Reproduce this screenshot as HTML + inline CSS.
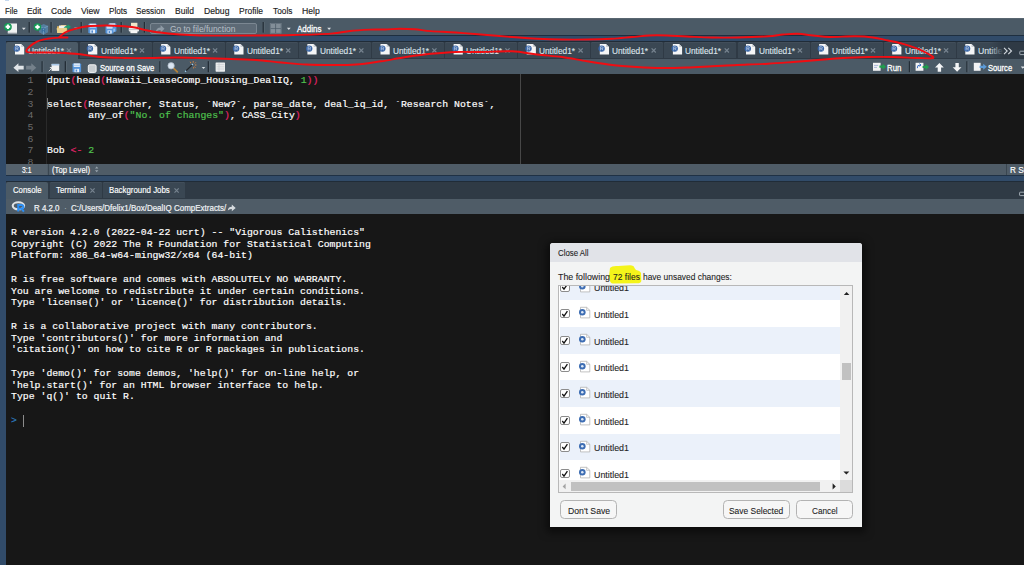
<!DOCTYPE html>
<html><head><meta charset="utf-8"><title>RStudio</title>
<style>
html,body{margin:0;padding:0;background:#161616;}
#root{position:relative;width:1024px;height:565px;overflow:hidden;font-family:"Liberation Sans",sans-serif;}
.b{position:absolute;}
.t{position:absolute;white-space:pre;line-height:1;transform-origin:0 0;display:inline-block;font-family:"Liberation Sans",sans-serif;}
.m{position:absolute;white-space:pre;line-height:1;font-family:"Liberation Mono",monospace;font-size:9.8px;letter-spacing:0.02px;-webkit-text-stroke:0.18px currentColor;}
.m i{font-style:normal;}
.m i.p{color:#e5246a;}
.m i.s{color:#4fc24f;}
svg{position:absolute;overflow:visible;}
</style></head><body><div id="root">
<div class="b" style="left:0px;top:0px;width:1024px;height:565px;background:#171717;"></div>
<div class="b" style="left:0px;top:0px;width:1024px;height:18px;background:#ffffff;"></div>
<div class="b" style="left:0px;top:18px;width:1024px;height:17.5px;background:#4b5a66;"></div>
<div class="b" style="left:0px;top:18px;width:1024px;height:1.4px;background:linear-gradient(#66727b,#4b5a66);"></div>
<div class="b" style="left:5px;top:0px;width:4px;height:1px;background:#c5d9ef;"></div>
<div class="b" style="left:0px;top:35.5px;width:1024px;height:529.5px;background:#314b69;"></div>
<div class="b" style="left:0px;top:35.4px;width:1024px;height:1.1px;background:#1e2f40;"></div>
<div class="b" style="left:6.2px;top:41px;width:1017.8px;height:1px;background:#202c38;"></div>
<div class="b" style="left:6.2px;top:42px;width:1017.8px;height:17px;background:#2f3a45;"></div>
<div class="b" style="left:6.2px;top:58.5px;width:1017.8px;height:15.8px;background:#4b5a66;"></div>
<div class="b" style="left:6.2px;top:74.2px;width:1017.8px;height:90px;background:#171717;"></div>
<div class="b" style="left:6.2px;top:163.6px;width:1017.8px;height:11.6px;background:#4f5c67;"></div>
<div class="b" style="left:6.2px;top:175.2px;width:1017.8px;height:0.9px;background:#1f3145;"></div>
<div class="b" style="left:6.2px;top:181.1px;width:1017.8px;height:1px;background:#202c38;"></div>
<div class="b" style="left:6.2px;top:182px;width:1017.8px;height:16.6px;background:#2f3a45;"></div>
<div class="b" style="left:6.2px;top:198.6px;width:1017.8px;height:15.2px;background:#4f5c67;"></div>
<div class="b" style="left:6.2px;top:213.8px;width:1017.8px;height:352px;background:#171717;"></div>
<span class="t" style="left:4.70px;top:6.00px;font-size:9.7px;color:#1b1b1b;transform:scaleX(0.8126);-webkit-text-stroke:0.15px #1b1b1b;">File</span>
<span class="t" style="left:26.60px;top:6.00px;font-size:9.7px;color:#1b1b1b;transform:scaleX(0.8615);-webkit-text-stroke:0.15px #1b1b1b;">Edit</span>
<span class="t" style="left:50.70px;top:6.00px;font-size:9.7px;color:#1b1b1b;transform:scaleX(0.8798);-webkit-text-stroke:0.15px #1b1b1b;">Code</span>
<span class="t" style="left:80.60px;top:6.00px;font-size:9.7px;color:#1b1b1b;transform:scaleX(0.8921);-webkit-text-stroke:0.15px #1b1b1b;">View</span>
<span class="t" style="left:108.80px;top:6.00px;font-size:9.7px;color:#1b1b1b;transform:scaleX(0.8440);-webkit-text-stroke:0.15px #1b1b1b;">Plots</span>
<span class="t" style="left:136.20px;top:6.00px;font-size:9.7px;color:#1b1b1b;transform:scaleX(0.8433);-webkit-text-stroke:0.15px #1b1b1b;">Session</span>
<span class="t" style="left:174.60px;top:6.00px;font-size:9.7px;color:#1b1b1b;transform:scaleX(0.8809);-webkit-text-stroke:0.15px #1b1b1b;">Build</span>
<span class="t" style="left:203.50px;top:6.00px;font-size:9.7px;color:#1b1b1b;transform:scaleX(0.8922);-webkit-text-stroke:0.15px #1b1b1b;">Debug</span>
<span class="t" style="left:238.90px;top:6.00px;font-size:9.7px;color:#1b1b1b;transform:scaleX(0.8766);-webkit-text-stroke:0.15px #1b1b1b;">Profile</span>
<span class="t" style="left:272.60px;top:6.00px;font-size:9.7px;color:#1b1b1b;transform:scaleX(0.8568);-webkit-text-stroke:0.15px #1b1b1b;">Tools</span>
<span class="t" style="left:302.00px;top:6.00px;font-size:9.7px;color:#1b1b1b;transform:scaleX(0.8923);-webkit-text-stroke:0.15px #1b1b1b;">Help</span>
<div class="b" style="left:150px;top:22.6px;width:107.2px;height:11.2px;background:#5d6a76;border:0.8px solid #7b8792;border-radius:2px;box-sizing:border-box;"></div>
<span class="t" style="left:170.30px;top:24.00px;font-size:9.6px;color:#b7bfc6;transform:scaleX(0.8754);">Go to file/function</span>
<span class="t" style="left:297.20px;top:24.00px;font-size:9.6px;color:#ffffff;transform:scaleX(0.8313);-webkit-text-stroke:0.3px #ffffff;">Addins</span>
<div class="b" style="left:6.2px;top:42px;width:71.6px;height:17px;background:#4b5a66;border-radius:2px 2px 0 0;"></div>
<span class="t" style="left:27.50px;top:47.00px;font-size:8.9px;color:#dfe5ec;transform:scaleX(0.9355);-webkit-text-stroke:0.12px #dfe5ec;">Untitled1*</span>
<div class="b" style="left:79.6px;top:42px;width:72px;height:15.8px;background:#3a4753;border-radius:2px 2px 0 0;box-shadow:inset 0 0.6px 0 #4a5763;"></div>
<span class="t" style="left:100.60px;top:47.00px;font-size:8.9px;color:#dfe5ec;transform:scaleX(0.9355);-webkit-text-stroke:0.12px #dfe5ec;">Untitled1*</span>
<div class="b" style="left:152.7px;top:42px;width:72px;height:15.8px;background:#3a4753;border-radius:2px 2px 0 0;box-shadow:inset 0 0.6px 0 #4a5763;"></div>
<span class="t" style="left:173.70px;top:47.00px;font-size:8.9px;color:#dfe5ec;transform:scaleX(0.9355);-webkit-text-stroke:0.12px #dfe5ec;">Untitled1*</span>
<div class="b" style="left:225.79999999999998px;top:42px;width:72px;height:15.8px;background:#3a4753;border-radius:2px 2px 0 0;box-shadow:inset 0 0.6px 0 #4a5763;"></div>
<span class="t" style="left:246.80px;top:47.00px;font-size:8.9px;color:#dfe5ec;transform:scaleX(0.9355);-webkit-text-stroke:0.12px #dfe5ec;">Untitled1*</span>
<div class="b" style="left:298.9px;top:42px;width:72px;height:15.8px;background:#3a4753;border-radius:2px 2px 0 0;box-shadow:inset 0 0.6px 0 #4a5763;"></div>
<span class="t" style="left:319.90px;top:47.00px;font-size:8.9px;color:#dfe5ec;transform:scaleX(0.9355);-webkit-text-stroke:0.12px #dfe5ec;">Untitled1*</span>
<div class="b" style="left:372.0px;top:42px;width:72px;height:15.8px;background:#3a4753;border-radius:2px 2px 0 0;box-shadow:inset 0 0.6px 0 #4a5763;"></div>
<span class="t" style="left:393.00px;top:47.00px;font-size:8.9px;color:#dfe5ec;transform:scaleX(0.9355);-webkit-text-stroke:0.12px #dfe5ec;">Untitled1*</span>
<div class="b" style="left:445.1px;top:42px;width:72px;height:15.8px;background:#3a4753;border-radius:2px 2px 0 0;box-shadow:inset 0 0.6px 0 #4a5763;"></div>
<span class="t" style="left:466.10px;top:47.00px;font-size:8.9px;color:#dfe5ec;transform:scaleX(0.9355);-webkit-text-stroke:0.12px #dfe5ec;">Untitled1*</span>
<div class="b" style="left:518.1999999999999px;top:42px;width:72px;height:15.8px;background:#3a4753;border-radius:2px 2px 0 0;box-shadow:inset 0 0.6px 0 #4a5763;"></div>
<span class="t" style="left:539.20px;top:47.00px;font-size:8.9px;color:#dfe5ec;transform:scaleX(0.9355);-webkit-text-stroke:0.12px #dfe5ec;">Untitled1*</span>
<div class="b" style="left:591.3px;top:42px;width:72px;height:15.8px;background:#3a4753;border-radius:2px 2px 0 0;box-shadow:inset 0 0.6px 0 #4a5763;"></div>
<span class="t" style="left:612.30px;top:47.00px;font-size:8.9px;color:#dfe5ec;transform:scaleX(0.9355);-webkit-text-stroke:0.12px #dfe5ec;">Untitled1*</span>
<div class="b" style="left:664.4px;top:42px;width:72px;height:15.8px;background:#3a4753;border-radius:2px 2px 0 0;box-shadow:inset 0 0.6px 0 #4a5763;"></div>
<span class="t" style="left:685.40px;top:47.00px;font-size:8.9px;color:#dfe5ec;transform:scaleX(0.9355);-webkit-text-stroke:0.12px #dfe5ec;">Untitled1*</span>
<div class="b" style="left:737.5px;top:42px;width:72px;height:15.8px;background:#3a4753;border-radius:2px 2px 0 0;box-shadow:inset 0 0.6px 0 #4a5763;"></div>
<span class="t" style="left:758.50px;top:47.00px;font-size:8.9px;color:#dfe5ec;transform:scaleX(0.9355);-webkit-text-stroke:0.12px #dfe5ec;">Untitled1*</span>
<div class="b" style="left:810.6px;top:42px;width:72px;height:15.8px;background:#3a4753;border-radius:2px 2px 0 0;box-shadow:inset 0 0.6px 0 #4a5763;"></div>
<span class="t" style="left:831.60px;top:47.00px;font-size:8.9px;color:#dfe5ec;transform:scaleX(0.9355);-webkit-text-stroke:0.12px #dfe5ec;">Untitled1*</span>
<div class="b" style="left:883.6999999999999px;top:42px;width:72px;height:15.8px;background:#3a4753;border-radius:2px 2px 0 0;box-shadow:inset 0 0.6px 0 #4a5763;"></div>
<span class="t" style="left:904.70px;top:47.00px;font-size:8.9px;color:#dfe5ec;transform:scaleX(0.9355);-webkit-text-stroke:0.12px #dfe5ec;">Untitled1*</span>
<div class="b" style="left:956.8px;top:42px;width:72px;height:15.8px;background:#3a4753;border-radius:2px 2px 0 0;box-shadow:inset 0 0.6px 0 #4a5763;"></div>
<span class="t" style="left:977.80px;top:47.00px;font-size:8.9px;color:#dfe5ec;transform:scaleX(0.9752);-webkit-text-stroke:0.12px #dfe5ec;">Untitle</span>
<div class="b" style="left:989px;top:42px;width:15px;height:16.4px;background:linear-gradient(90deg,rgba(47,58,69,0),#2f3a45);"></div>
<div class="b" style="left:1003.5px;top:42px;width:21px;height:16.4px;background:#2f3a45;"></div>
<span class="t" style="left:99.60px;top:63.00px;font-size:9.4px;color:#ffffff;transform:scaleX(0.8133);-webkit-text-stroke:0.3px #ffffff;">Source on Save</span>
<span class="t" style="left:887.40px;top:63.00px;font-size:9.4px;color:#ffffff;transform:scaleX(0.8351);-webkit-text-stroke:0.3px #ffffff;">Run</span>
<span class="t" style="left:988.20px;top:63.00px;font-size:9.4px;color:#ffffff;transform:scaleX(0.8126);-webkit-text-stroke:0.3px #ffffff;">Source</span>
<div class="b" style="left:6.2px;top:163.6px;width:41px;height:11.6px;background:#55626d;"></div>
<div class="b" style="left:48px;top:163.6px;width:1px;height:11.6px;background:#3a4650;"></div>
<div class="b" style="left:1006px;top:163.6px;width:1px;height:11.6px;background:#3a4650;"></div>
<span class="t" style="left:21.90px;top:166.00px;font-size:8.8px;color:#ffffff;transform:scaleX(0.7685);-webkit-text-stroke:0.15px #ffffff;">3:1</span>
<span class="t" style="left:52.30px;top:166.00px;font-size:8.8px;color:#ffffff;transform:scaleX(0.8730);-webkit-text-stroke:0.15px #ffffff;">(Top Level)</span>
<span class="t" style="left:1010.30px;top:166.00px;font-size:8.8px;color:#ffffff;transform:scaleX(0.9282);-webkit-text-stroke:0.15px #ffffff;">R Sc</span>
<div class="b" style="left:6.2px;top:182px;width:41.5px;height:17px;background:#4b5a66;border-radius:2px 2px 0 0;"></div>
<div class="b" style="left:49.6px;top:182px;width:52.6px;height:16px;background:#3a4753;border-radius:2px 2px 0 0;box-shadow:inset 0 0.6px 0 #4a5763;"></div>
<div class="b" style="left:103.2px;top:182px;width:82px;height:16px;background:#3a4753;border-radius:2px 2px 0 0;box-shadow:inset 0 0.6px 0 #4a5763;"></div>
<span class="t" style="left:13.30px;top:186.00px;font-size:8.9px;color:#ffffff;transform:scaleX(0.8759);-webkit-text-stroke:0.15px #ffffff;">Console</span>
<span class="t" style="left:56.00px;top:186.00px;font-size:8.9px;color:#ffffff;transform:scaleX(0.8921);-webkit-text-stroke:0.15px #ffffff;">Terminal</span>
<span class="t" style="left:109.40px;top:186.00px;font-size:8.9px;color:#ffffff;transform:scaleX(0.8856);-webkit-text-stroke:0.15px #ffffff;">Background Jobs</span>
<span class="t" style="left:34.00px;top:203.00px;font-size:9.5px;color:#f1f3f5;transform:scaleX(0.8326);-webkit-text-stroke:0.25px #f1f3f5;">R 4.2.0</span>
<span class="t" style="left:63.80px;top:203.00px;font-size:9.5px;color:#aab3bb;transform:scaleX(0.9000);">·</span>
<span class="t" style="left:70.50px;top:204.00px;font-size:9.0px;color:#f1f3f5;transform:scaleX(0.8872);-webkit-text-stroke:0.2px #f1f3f5;">C:/Users/Dfelix1/Box/DealIQ CompExtracts/</span>
<span class="m" style="left:15px;width:18.5px;text-align:right;top:76px;color:#6c6c6c;-webkit-text-stroke:0;">1</span>
<span class="m" style="left:47px;top:76.00px;color:#ffffff;">dput<i class="p">(</i>head<i class="p">(</i>Hawaii_LeaseComp_Housing_DealIQ, <i class="s">1</i><i class="p">))</i></span>
<span class="m" style="left:15px;width:18.5px;text-align:right;top:88px;color:#6c6c6c;-webkit-text-stroke:0;">2</span>
<span class="m" style="left:15px;width:18.5px;text-align:right;top:100px;color:#6c6c6c;-webkit-text-stroke:0;">3</span>
<span class="m" style="left:47px;top:100.00px;color:#ffffff;">select<i class="p">(</i>Researcher, Status, `New?`, parse_date, deal_iq_id, `Research Notes`,</span>
<span class="m" style="left:15px;width:18.5px;text-align:right;top:111px;color:#6c6c6c;-webkit-text-stroke:0;">4</span>
<span class="m" style="left:47px;top:111.00px;color:#ffffff;">       any_of<i class="p">(</i><i class="s">"No. of changes"</i><i class="p">)</i>, CASS_City<i class="p">)</i></span>
<span class="m" style="left:15px;width:18.5px;text-align:right;top:123px;color:#6c6c6c;-webkit-text-stroke:0;">5</span>
<span class="m" style="left:15px;width:18.5px;text-align:right;top:135px;color:#6c6c6c;-webkit-text-stroke:0;">6</span>
<span class="m" style="left:15px;width:18.5px;text-align:right;top:146px;color:#6c6c6c;-webkit-text-stroke:0;">7</span>
<span class="m" style="left:47px;top:146.00px;color:#ffffff;">Bob <i class="p">&lt;-</i> <i class="s">2</i></span>
<span class="m" style="left:15px;width:18.5px;text-align:right;top:158px;color:#6c6c6c;-webkit-text-stroke:0;">8</span>
<div class="b" style="left:45.5px;top:74px;width:0.8px;height:90px;background:#2a2a2a;"></div>
<div class="b" style="left:520px;top:74.2px;width:1px;height:89.4px;background:#474747;"></div>
<span class="m" style="left:11px;top:228.00px;color:#ffffff;">R version 4.2.0 (2022-04-22 ucrt) -- "Vigorous Calisthenics"</span>
<span class="m" style="left:11px;top:240.00px;color:#ffffff;">Copyright (C) 2022 The R Foundation for Statistical Computing</span>
<span class="m" style="left:11px;top:251.00px;color:#ffffff;">Platform: x86_64-w64-mingw32/x64 (64-bit)</span>
<span class="m" style="left:11px;top:275.00px;color:#ffffff;">R is free software and comes with ABSOLUTELY NO WARRANTY.</span>
<span class="m" style="left:11px;top:287.00px;color:#ffffff;">You are welcome to redistribute it under certain conditions.</span>
<span class="m" style="left:11px;top:298.00px;color:#ffffff;">Type 'license()' or 'licence()' for distribution details.</span>
<span class="m" style="left:11px;top:322.00px;color:#ffffff;">R is a collaborative project with many contributors.</span>
<span class="m" style="left:11px;top:334.00px;color:#ffffff;">Type 'contributors()' for more information and</span>
<span class="m" style="left:11px;top:345.00px;color:#ffffff;">'citation()' on how to cite R or R packages in publications.</span>
<span class="m" style="left:11px;top:369.00px;color:#ffffff;">Type 'demo()' for some demos, 'help()' for on-line help, or</span>
<span class="m" style="left:11px;top:381.00px;color:#ffffff;">'help.start()' for an HTML browser interface to help.</span>
<span class="m" style="left:11px;top:392.00px;color:#ffffff;">Type 'q()' to quit R.</span>
<span class="m" style="left:11px;top:416.00px;color:#2d7bbf;">&gt;</span>
<div class="b" style="left:23.3px;top:415px;width:1.1px;height:11.6px;background:#8c8c8c;"></div>
<div class="b" style="left:47px;top:97.5px;width:1px;height:11.5px;background:#7c7c7c;"></div>
<div class="b" style="left:550.3px;top:242.6px;width:311.9px;height:284.7px;background:#f3f4f4;border-radius:3px 3px 0 0;box-shadow:0 2px 9px 3px rgba(0,0,0,0.55);"></div>
<div class="b" style="left:550.3px;top:242.6px;width:311.9px;height:19.2px;background:#e1e3e8;border-radius:3px 3px 0 0;"></div>
<span class="t" style="left:557.50px;top:249.00px;font-size:9.0px;color:#1e1e1e;transform:scaleX(0.8710);-webkit-text-stroke:0.1px #1e1e1e;">Close All</span>
<svg style="left:0;top:0" width="1024" height="565"><path d="M610 268 Q612 265.5 618 266 L630 265.3 Q634 265.5 634.5 268 L636 270 Q640 270.5 641 273 L641.3 281 Q641 283.5 636 283.3 L614 283.6 Q610.5 283.5 610 281 L609 276 Z" fill="#f4f41a"/></svg>
<span class="t" style="left:558.00px;top:273.00px;font-size:9.3px;color:#1e1e1e;transform:scaleX(0.9490);-webkit-text-stroke:0.1px #1e1e1e;">The following</span>
<span class="t" style="left:613.10px;top:273.00px;font-size:9.3px;color:#1e1e1e;transform:scaleX(0.9129);-webkit-text-stroke:0.1px #1e1e1e;">72 files</span>
<span class="t" style="left:643.10px;top:273.00px;font-size:9.3px;color:#1e1e1e;transform:scaleX(0.9050);-webkit-text-stroke:0.1px #1e1e1e;">have unsaved changes:</span>
<div class="b" style="left:558px;top:285px;width:295px;height:207.5px;background:#ffffff;border:1px solid #b8b8b8;box-sizing:border-box;overflow:hidden;">
<div class="b" style="left:0.70px;top:-1.00px;width:280.30px;height:15.40px;background:#ebf1fa;"></div>
<div class="b" style="left:0.70px;top:41.07px;width:280.30px;height:26.67px;background:#ebf1fa;"></div>
<div class="b" style="left:0.70px;top:94.41px;width:280.30px;height:26.67px;background:#ebf1fa;"></div>
<div class="b" style="left:0.70px;top:147.75px;width:280.30px;height:26.67px;background:#ebf1fa;"></div>
<div class="b" style="left:1.40px;top:-3.70px;width:9.6px;height:9.4px;box-sizing:border-box;border:1px solid #8c8c8c;border-radius:2px;background:#fff;"></div>
<svg style="left:1.40px;top:-3.70px" width="10" height="10"><path d="M2.3 5 L4 7.2 L7.4 2.2" fill="none" stroke="#111" stroke-width="1.3"/></svg>
<svg style="left:20.00px;top:-5.40px" width="12" height="12"><path d="M1.5 0.3 H7.6 L10.8 3.3 V10.9 H1.5 Z" fill="#fff" stroke="#a9a9a9" stroke-width="0.7"/><path d="M7.6 0.3 V3.3 H10.8" fill="none" stroke="#a9a9a9" stroke-width="0.6"/><circle cx="3.3" cy="5.3" r="3.3" fill="#3d6db3"/><circle cx="3.3" cy="5.3" r="1.3" fill="#dfe8f5"/></svg>
<span class="t" style="left:34.90px;top:-2.00px;font-size:9.3px;color:#1e1e1e;transform:scaleX(0.9509);-webkit-text-stroke:0.1px #1e1e1e;">Untitled1</span>
<div class="b" style="left:1.40px;top:22.97px;width:9.6px;height:9.4px;box-sizing:border-box;border:1px solid #8c8c8c;border-radius:2px;background:#fff;"></div>
<svg style="left:1.40px;top:22.97px" width="10" height="10"><path d="M2.3 5 L4 7.2 L7.4 2.2" fill="none" stroke="#111" stroke-width="1.3"/></svg>
<svg style="left:20.00px;top:21.27px" width="12" height="12"><path d="M1.5 0.3 H7.6 L10.8 3.3 V10.9 H1.5 Z" fill="#fff" stroke="#a9a9a9" stroke-width="0.7"/><path d="M7.6 0.3 V3.3 H10.8" fill="none" stroke="#a9a9a9" stroke-width="0.6"/><circle cx="3.3" cy="5.3" r="3.3" fill="#3d6db3"/><circle cx="3.3" cy="5.3" r="1.3" fill="#dfe8f5"/></svg>
<span class="t" style="left:34.90px;top:25.00px;font-size:9.3px;color:#1e1e1e;transform:scaleX(0.9509);-webkit-text-stroke:0.1px #1e1e1e;">Untitled1</span>
<div class="b" style="left:1.40px;top:49.64px;width:9.6px;height:9.4px;box-sizing:border-box;border:1px solid #8c8c8c;border-radius:2px;background:#fff;"></div>
<svg style="left:1.40px;top:49.64px" width="10" height="10"><path d="M2.3 5 L4 7.2 L7.4 2.2" fill="none" stroke="#111" stroke-width="1.3"/></svg>
<svg style="left:20.00px;top:47.94px" width="12" height="12"><path d="M1.5 0.3 H7.6 L10.8 3.3 V10.9 H1.5 Z" fill="#fff" stroke="#a9a9a9" stroke-width="0.7"/><path d="M7.6 0.3 V3.3 H10.8" fill="none" stroke="#a9a9a9" stroke-width="0.6"/><circle cx="3.3" cy="5.3" r="3.3" fill="#3d6db3"/><circle cx="3.3" cy="5.3" r="1.3" fill="#dfe8f5"/></svg>
<span class="t" style="left:34.90px;top:52.00px;font-size:9.3px;color:#1e1e1e;transform:scaleX(0.9509);-webkit-text-stroke:0.1px #1e1e1e;">Untitled1</span>
<div class="b" style="left:1.40px;top:76.31px;width:9.6px;height:9.4px;box-sizing:border-box;border:1px solid #8c8c8c;border-radius:2px;background:#fff;"></div>
<svg style="left:1.40px;top:76.31px" width="10" height="10"><path d="M2.3 5 L4 7.2 L7.4 2.2" fill="none" stroke="#111" stroke-width="1.3"/></svg>
<svg style="left:20.00px;top:74.61px" width="12" height="12"><path d="M1.5 0.3 H7.6 L10.8 3.3 V10.9 H1.5 Z" fill="#fff" stroke="#a9a9a9" stroke-width="0.7"/><path d="M7.6 0.3 V3.3 H10.8" fill="none" stroke="#a9a9a9" stroke-width="0.6"/><circle cx="3.3" cy="5.3" r="3.3" fill="#3d6db3"/><circle cx="3.3" cy="5.3" r="1.3" fill="#dfe8f5"/></svg>
<span class="t" style="left:34.90px;top:78.00px;font-size:9.3px;color:#1e1e1e;transform:scaleX(0.9509);-webkit-text-stroke:0.1px #1e1e1e;">Untitled1</span>
<div class="b" style="left:1.40px;top:102.98px;width:9.6px;height:9.4px;box-sizing:border-box;border:1px solid #8c8c8c;border-radius:2px;background:#fff;"></div>
<svg style="left:1.40px;top:102.98px" width="10" height="10"><path d="M2.3 5 L4 7.2 L7.4 2.2" fill="none" stroke="#111" stroke-width="1.3"/></svg>
<svg style="left:20.00px;top:101.28px" width="12" height="12"><path d="M1.5 0.3 H7.6 L10.8 3.3 V10.9 H1.5 Z" fill="#fff" stroke="#a9a9a9" stroke-width="0.7"/><path d="M7.6 0.3 V3.3 H10.8" fill="none" stroke="#a9a9a9" stroke-width="0.6"/><circle cx="3.3" cy="5.3" r="3.3" fill="#3d6db3"/><circle cx="3.3" cy="5.3" r="1.3" fill="#dfe8f5"/></svg>
<span class="t" style="left:34.90px;top:105.00px;font-size:9.3px;color:#1e1e1e;transform:scaleX(0.9509);-webkit-text-stroke:0.1px #1e1e1e;">Untitled1</span>
<div class="b" style="left:1.40px;top:129.65px;width:9.6px;height:9.4px;box-sizing:border-box;border:1px solid #8c8c8c;border-radius:2px;background:#fff;"></div>
<svg style="left:1.40px;top:129.65px" width="10" height="10"><path d="M2.3 5 L4 7.2 L7.4 2.2" fill="none" stroke="#111" stroke-width="1.3"/></svg>
<svg style="left:20.00px;top:127.95px" width="12" height="12"><path d="M1.5 0.3 H7.6 L10.8 3.3 V10.9 H1.5 Z" fill="#fff" stroke="#a9a9a9" stroke-width="0.7"/><path d="M7.6 0.3 V3.3 H10.8" fill="none" stroke="#a9a9a9" stroke-width="0.6"/><circle cx="3.3" cy="5.3" r="3.3" fill="#3d6db3"/><circle cx="3.3" cy="5.3" r="1.3" fill="#dfe8f5"/></svg>
<span class="t" style="left:34.90px;top:132.00px;font-size:9.3px;color:#1e1e1e;transform:scaleX(0.9509);-webkit-text-stroke:0.1px #1e1e1e;">Untitled1</span>
<div class="b" style="left:1.40px;top:156.32px;width:9.6px;height:9.4px;box-sizing:border-box;border:1px solid #8c8c8c;border-radius:2px;background:#fff;"></div>
<svg style="left:1.40px;top:156.32px" width="10" height="10"><path d="M2.3 5 L4 7.2 L7.4 2.2" fill="none" stroke="#111" stroke-width="1.3"/></svg>
<svg style="left:20.00px;top:154.62px" width="12" height="12"><path d="M1.5 0.3 H7.6 L10.8 3.3 V10.9 H1.5 Z" fill="#fff" stroke="#a9a9a9" stroke-width="0.7"/><path d="M7.6 0.3 V3.3 H10.8" fill="none" stroke="#a9a9a9" stroke-width="0.6"/><circle cx="3.3" cy="5.3" r="3.3" fill="#3d6db3"/><circle cx="3.3" cy="5.3" r="1.3" fill="#dfe8f5"/></svg>
<span class="t" style="left:34.90px;top:158.00px;font-size:9.3px;color:#1e1e1e;transform:scaleX(0.9509);-webkit-text-stroke:0.1px #1e1e1e;">Untitled1</span>
<div class="b" style="left:1.40px;top:182.99px;width:9.6px;height:9.4px;box-sizing:border-box;border:1px solid #8c8c8c;border-radius:2px;background:#fff;"></div>
<svg style="left:1.40px;top:182.99px" width="10" height="10"><path d="M2.3 5 L4 7.2 L7.4 2.2" fill="none" stroke="#111" stroke-width="1.3"/></svg>
<svg style="left:20.00px;top:181.29px" width="12" height="12"><path d="M1.5 0.3 H7.6 L10.8 3.3 V10.9 H1.5 Z" fill="#fff" stroke="#a9a9a9" stroke-width="0.7"/><path d="M7.6 0.3 V3.3 H10.8" fill="none" stroke="#a9a9a9" stroke-width="0.6"/><circle cx="3.3" cy="5.3" r="3.3" fill="#3d6db3"/><circle cx="3.3" cy="5.3" r="1.3" fill="#dfe8f5"/></svg>
<span class="t" style="left:34.90px;top:185.00px;font-size:9.3px;color:#1e1e1e;transform:scaleX(0.9509);-webkit-text-stroke:0.1px #1e1e1e;">Untitled1</span>
<div class="b" style="left:281.00px;top:-1.00px;width:13.00px;height:196.00px;background:#f1f1f1;"></div>
<div class="b" style="left:283.00px;top:77.00px;width:8.60px;height:16.50px;background:#c1c1c1;"></div>
<svg style="left:283.5px;top:4.5px" width="8" height="5"><path d="M0.8 4 L3.6 0.9 L6.4 4 Z" fill="#222"/></svg>
<svg style="left:283.79999999999995px;top:184.5px" width="8" height="5"><path d="M0.4 0.5 L3.4 3.6 L6.4 0.5 Z" fill="#222"/></svg>
<div class="b" style="left:0.00px;top:194.40px;width:281.00px;height:12.10px;background:#f1f1f1;"></div>
<div class="b" style="left:11.60px;top:196.00px;width:249.20px;height:8.60px;background:#c1c1c1;"></div>
<svg style="left:3px;top:197px" width="5" height="8"><path d="M3.6 0.5 L0.6 3.4 L3.6 6.3 Z" fill="#a3a3a3"/></svg>
<svg style="left:273px;top:197px" width="5" height="8"><path d="M0.6 0.3 L3.8 3.4 L0.6 6.5 Z" fill="#222"/></svg>
<div class="b" style="left:281.00px;top:194.40px;width:13.00px;height:12.10px;background:#dcdcdc;"></div>
</div>
<div class="b" style="left:560px;top:500px;width:57px;height:19.4px;box-sizing:border-box;border:1px solid #b3b3b3;border-radius:4.5px;background:#f6f6f6;"></div>
<span class="t" style="left:567.60px;top:506.00px;font-size:9.4px;color:#1e1e1e;transform:scaleX(0.9237);-webkit-text-stroke:0.1px #1e1e1e;">Don't Save</span>
<div class="b" style="left:722.5px;top:500px;width:67.20000000000005px;height:19.4px;box-sizing:border-box;border:1px solid #b3b3b3;border-radius:4.5px;background:#f6f6f6;"></div>
<span class="t" style="left:728.80px;top:506.00px;font-size:9.4px;color:#1e1e1e;transform:scaleX(0.8975);-webkit-text-stroke:0.1px #1e1e1e;">Save Selected</span>
<div class="b" style="left:796px;top:500px;width:56.60000000000002px;height:19.4px;box-sizing:border-box;border:1px solid #b3b3b3;border-radius:4.5px;background:#f6f6f6;"></div>
<span class="t" style="left:811.50px;top:506.00px;font-size:9.4px;color:#1e1e1e;transform:scaleX(0.8784);-webkit-text-stroke:0.1px #1e1e1e;">Cancel</span>
<svg style="left:0;top:0" width="1024" height="565" viewBox="0 0 1024 565"><rect x="7.8" y="23.5" width="9.2" height="9.8" fill="#f1f2f3"/><rect x="7.8" y="32.3" width="9.2" height="1" fill="#c9cdd1"/><circle cx="7.9" cy="26.8" r="3.9" fill="#149a55"/><path d="M5.6 26.8 h4.6 M7.9 24.5 v4.6" stroke="#fff" stroke-width="2"/><path d="M21.9 27.8 h3.8 l-1.9 2.2 Z" fill="#d9dee2"/><rect x="28.6" y="22" width="1.3" height="10.600000000000001" fill="#232d36"/><rect x="29.900000000000002" y="22" width="0.8" height="10.600000000000001" fill="#5a6873"/><path d="M39 26.2 l4.7 -2.2 l4.4 2 v6.2 l-4.6 2.5 l-4.5 -2.4 Z" fill="#5a8db8" opacity="0.7"/><path d="M39 26.2 l4.5 2.1 l4.6 -2.3 M43.5 28.3 v6.4" stroke="#8fbadb" stroke-width="0.6" fill="none" opacity="0.8"/><path d="M42.2 32.5 v-4 h1.6 q1.1 0 1.1 1.1 q0 1 -1.1 1 h-1.4 M44 30.7 l1.1 1.8" fill="none" stroke="#2f6aa0" stroke-width="0.8"/><circle cx="37.5" cy="27" r="3.8" fill="#149a55"/><path d="M35.3 27 h4.4 M37.5 24.8 v4.4" stroke="#fff" stroke-width="1.9"/><rect x="50.5" y="22" width="1.3" height="10.600000000000001" fill="#232d36"/><rect x="51.800000000000004" y="22" width="0.8" height="10.600000000000001" fill="#5a6873"/><path d="M57 26.3 h3.3 l0.9 -1.2 h5.2 v1.2 h0.8 v6.6 h-10.2 Z" fill="#d9b25f"/><path d="M59 25.6 h6.8 v3 h-6.8 Z" fill="#f2f2ee"/><path d="M56.6 28.2 h10.2 l-0.9 4.8 h-8.6 Z" fill="#ecd089"/><path d="M63.6 27.8 q1.5 -2.2 4 -2 v-1.6 l3.4 2.6 l-3.4 2.6 v-1.6 q-2 -0.2 -4 0 Z" fill="#1c9d6b"/><path d="M74.2 27.6 h3.6 l-1.8 2.0 Z" fill="#aeb7be"/><rect x="80.6" y="22" width="1.3" height="10.600000000000001" fill="#232d36"/><rect x="81.89999999999999" y="22" width="0.8" height="10.600000000000001" fill="#5a6873"/><rect x="88.3" y="23.7" width="8.8" height="9.6" rx="0.8" fill="#5796dc"/><rect x="89.5" y="23.7" width="6.4" height="3.84" fill="#e9f1fb"/><rect x="89.5" y="25.236" width="6.4" height="0.9" fill="#9cc3ee"/><rect x="90.3" y="29.652" width="4.800000000000001" height="3.6479999999999997" fill="#e9f1fb"/><rect x="91.39999999999999" y="30.419999999999998" width="1.6" height="2.304" fill="#4d89cf"/><rect x="108.2" y="23.4" width="8.2" height="8.4" rx="0.8" fill="#5796dc"/><rect x="109.4" y="23.4" width="5.799999999999999" height="3.3600000000000003" fill="#e9f1fb"/><rect x="109.4" y="24.744" width="5.799999999999999" height="0.9" fill="#9cc3ee"/><rect x="110.2" y="28.607999999999997" width="4.199999999999999" height="3.192" fill="#e9f1fb"/><rect x="111.3" y="29.279999999999998" width="1.6" height="2.016" fill="#4d89cf"/><rect x="105.5" y="25.2" width="8.2" height="8.4" rx="0.8" fill="#5796dc"/><rect x="106.7" y="25.2" width="5.799999999999999" height="3.3600000000000003" fill="#e9f1fb"/><rect x="106.7" y="26.544" width="5.799999999999999" height="0.9" fill="#9cc3ee"/><rect x="107.5" y="30.408" width="4.199999999999999" height="3.192" fill="#e9f1fb"/><rect x="108.6" y="31.08" width="1.6" height="2.016" fill="#4d89cf"/><rect x="120.6" y="22" width="1.3" height="10.600000000000001" fill="#232d36"/><rect x="121.89999999999999" y="22" width="0.8" height="10.600000000000001" fill="#5a6873"/><rect x="131" y="22.8" width="6.4" height="4.6" fill="#efe6c9"/><rect x="128.8" y="27" width="10.2" height="4.6" rx="0.8" fill="#e6e8ea"/><rect x="130.4" y="30.4" width="7" height="2.8" fill="#f7f7f7"/><rect x="128.8" y="29.2" width="10.2" height="0.8" fill="#b9bec3"/><rect x="143.8" y="22" width="1.3" height="10.600000000000001" fill="#232d36"/><rect x="145.1" y="22" width="0.8" height="10.600000000000001" fill="#5a6873"/><path d="M156 32 q0.2 -4.2 4.6 -4.4 v-2.6 l3.9 3.7 l-3.9 3.7 v-2.5 q-3 -0.2 -4.6 2.1 Z" fill="#8f9ba6"/><rect x="262.6" y="22" width="1.3" height="10.600000000000001" fill="#232d36"/><rect x="263.90000000000003" y="22" width="0.8" height="10.600000000000001" fill="#5a6873"/><rect x="270.6" y="23.9" width="4.7" height="4.2" fill="#828e98"/><rect x="270.6" y="28.7" width="4.7" height="4.2" fill="#828e98"/><rect x="276.1" y="23.9" width="4.7" height="4.2" fill="#828e98"/><rect x="276.1" y="28.7" width="4.7" height="4.2" fill="#828e98"/><rect x="270.2" y="23.5" width="11" height="9.8" fill="none" stroke="#76828c" stroke-width="0.6"/><path d="M286.9 27.8 h3.8 l-1.9 2.2 Z" fill="#d9dee2"/><path d="M327.2 27.8 h3.8 l-1.9 2.2 Z" fill="#d9dee2"/><path d="M15.0 43.9 h6.2 l3 3 v7.6 h-9.2 Z" fill="#f4f5f6"/><path d="M21.2 43.9 v3 h3 Z" fill="#c9ced3"/><circle cx="16.8" cy="48.6" r="3.2" fill="#3865a6"/><path d="M15.7 50.4 v-3.6 h1.5 q1.1 0 1.1 1 q0 1 -1.1 1 h-1.3 M17.3 48.8 l1.1 1.6" fill="none" stroke="#dfe8f5" stroke-width="0.7" opacity="0.85"/><path d="M66.8 48.3 l4.2 4.2 M71.0 48.3 l-4.2 4.2" stroke="#76838f" stroke-width="1.2"/><path d="M88.1 43.9 h6.2 l3 3 v7.6 h-9.2 Z" fill="#f4f5f6"/><path d="M94.3 43.9 v3 h3 Z" fill="#c9ced3"/><circle cx="89.89999999999999" cy="48.6" r="3.2" fill="#3865a6"/><path d="M88.8 50.4 v-3.6 h1.5 q1.1 0 1.1 1 q0 1 -1.1 1 h-1.3 M90.39999999999999 48.8 l1.1 1.6" fill="none" stroke="#dfe8f5" stroke-width="0.7" opacity="0.85"/><path d="M139.9 48.3 l4.2 4.2 M144.10000000000002 48.3 l-4.2 4.2" stroke="#76838f" stroke-width="1.2"/><path d="M161.2 43.9 h6.2 l3 3 v7.6 h-9.2 Z" fill="#f4f5f6"/><path d="M167.39999999999998 43.9 v3 h3 Z" fill="#c9ced3"/><circle cx="163.0" cy="48.6" r="3.2" fill="#3865a6"/><path d="M161.89999999999998 50.4 v-3.6 h1.5 q1.1 0 1.1 1 q0 1 -1.1 1 h-1.3 M163.5 48.8 l1.1 1.6" fill="none" stroke="#dfe8f5" stroke-width="0.7" opacity="0.85"/><path d="M212.99999999999997 48.3 l4.2 4.2 M217.2 48.3 l-4.2 4.2" stroke="#76838f" stroke-width="1.2"/><path d="M234.29999999999998 43.9 h6.2 l3 3 v7.6 h-9.2 Z" fill="#f4f5f6"/><path d="M240.49999999999997 43.9 v3 h3 Z" fill="#c9ced3"/><circle cx="236.1" cy="48.6" r="3.2" fill="#3865a6"/><path d="M234.99999999999997 50.4 v-3.6 h1.5 q1.1 0 1.1 1 q0 1 -1.1 1 h-1.3 M236.6 48.8 l1.1 1.6" fill="none" stroke="#dfe8f5" stroke-width="0.7" opacity="0.85"/><path d="M286.1 48.3 l4.2 4.2 M290.3 48.3 l-4.2 4.2" stroke="#76838f" stroke-width="1.2"/><path d="M307.4 43.9 h6.2 l3 3 v7.6 h-9.2 Z" fill="#f4f5f6"/><path d="M313.59999999999997 43.9 v3 h3 Z" fill="#c9ced3"/><circle cx="309.2" cy="48.6" r="3.2" fill="#3865a6"/><path d="M308.09999999999997 50.4 v-3.6 h1.5 q1.1 0 1.1 1 q0 1 -1.1 1 h-1.3 M309.7 48.8 l1.1 1.6" fill="none" stroke="#dfe8f5" stroke-width="0.7" opacity="0.85"/><path d="M359.2 48.3 l4.2 4.2 M363.4 48.3 l-4.2 4.2" stroke="#76838f" stroke-width="1.2"/><path d="M380.5 43.9 h6.2 l3 3 v7.6 h-9.2 Z" fill="#f4f5f6"/><path d="M386.7 43.9 v3 h3 Z" fill="#c9ced3"/><circle cx="382.3" cy="48.6" r="3.2" fill="#3865a6"/><path d="M381.2 50.4 v-3.6 h1.5 q1.1 0 1.1 1 q0 1 -1.1 1 h-1.3 M382.8 48.8 l1.1 1.6" fill="none" stroke="#dfe8f5" stroke-width="0.7" opacity="0.85"/><path d="M432.3 48.3 l4.2 4.2 M436.5 48.3 l-4.2 4.2" stroke="#76838f" stroke-width="1.2"/><path d="M453.59999999999997 43.9 h6.2 l3 3 v7.6 h-9.2 Z" fill="#f4f5f6"/><path d="M459.79999999999995 43.9 v3 h3 Z" fill="#c9ced3"/><circle cx="455.4" cy="48.6" r="3.2" fill="#3865a6"/><path d="M454.29999999999995 50.4 v-3.6 h1.5 q1.1 0 1.1 1 q0 1 -1.1 1 h-1.3 M455.9 48.8 l1.1 1.6" fill="none" stroke="#dfe8f5" stroke-width="0.7" opacity="0.85"/><path d="M505.4 48.3 l4.2 4.2 M509.59999999999997 48.3 l-4.2 4.2" stroke="#76838f" stroke-width="1.2"/><path d="M526.6999999999999 43.9 h6.2 l3 3 v7.6 h-9.2 Z" fill="#f4f5f6"/><path d="M532.9 43.9 v3 h3 Z" fill="#c9ced3"/><circle cx="528.4999999999999" cy="48.6" r="3.2" fill="#3865a6"/><path d="M527.4 50.4 v-3.6 h1.5 q1.1 0 1.1 1 q0 1 -1.1 1 h-1.3 M528.9999999999999 48.8 l1.1 1.6" fill="none" stroke="#dfe8f5" stroke-width="0.7" opacity="0.85"/><path d="M578.5 48.3 l4.2 4.2 M582.6999999999999 48.3 l-4.2 4.2" stroke="#76838f" stroke-width="1.2"/><path d="M599.8 43.9 h6.2 l3 3 v7.6 h-9.2 Z" fill="#f4f5f6"/><path d="M606.0 43.9 v3 h3 Z" fill="#c9ced3"/><circle cx="601.5999999999999" cy="48.6" r="3.2" fill="#3865a6"/><path d="M600.5 50.4 v-3.6 h1.5 q1.1 0 1.1 1 q0 1 -1.1 1 h-1.3 M602.0999999999999 48.8 l1.1 1.6" fill="none" stroke="#dfe8f5" stroke-width="0.7" opacity="0.85"/><path d="M651.6 48.3 l4.2 4.2 M655.8 48.3 l-4.2 4.2" stroke="#76838f" stroke-width="1.2"/><path d="M672.9 43.9 h6.2 l3 3 v7.6 h-9.2 Z" fill="#f4f5f6"/><path d="M679.1 43.9 v3 h3 Z" fill="#c9ced3"/><circle cx="674.6999999999999" cy="48.6" r="3.2" fill="#3865a6"/><path d="M673.6 50.4 v-3.6 h1.5 q1.1 0 1.1 1 q0 1 -1.1 1 h-1.3 M675.1999999999999 48.8 l1.1 1.6" fill="none" stroke="#dfe8f5" stroke-width="0.7" opacity="0.85"/><path d="M724.7 48.3 l4.2 4.2 M728.9 48.3 l-4.2 4.2" stroke="#76838f" stroke-width="1.2"/><path d="M746.0 43.9 h6.2 l3 3 v7.6 h-9.2 Z" fill="#f4f5f6"/><path d="M752.2 43.9 v3 h3 Z" fill="#c9ced3"/><circle cx="747.8" cy="48.6" r="3.2" fill="#3865a6"/><path d="M746.7 50.4 v-3.6 h1.5 q1.1 0 1.1 1 q0 1 -1.1 1 h-1.3 M748.3 48.8 l1.1 1.6" fill="none" stroke="#dfe8f5" stroke-width="0.7" opacity="0.85"/><path d="M797.8000000000001 48.3 l4.2 4.2 M802.0 48.3 l-4.2 4.2" stroke="#76838f" stroke-width="1.2"/><path d="M819.0999999999999 43.9 h6.2 l3 3 v7.6 h-9.2 Z" fill="#f4f5f6"/><path d="M825.3 43.9 v3 h3 Z" fill="#c9ced3"/><circle cx="820.8999999999999" cy="48.6" r="3.2" fill="#3865a6"/><path d="M819.8 50.4 v-3.6 h1.5 q1.1 0 1.1 1 q0 1 -1.1 1 h-1.3 M821.3999999999999 48.8 l1.1 1.6" fill="none" stroke="#dfe8f5" stroke-width="0.7" opacity="0.85"/><path d="M870.9 48.3 l4.2 4.2 M875.0999999999999 48.3 l-4.2 4.2" stroke="#76838f" stroke-width="1.2"/><path d="M892.1999999999999 43.9 h6.2 l3 3 v7.6 h-9.2 Z" fill="#f4f5f6"/><path d="M898.4 43.9 v3 h3 Z" fill="#c9ced3"/><circle cx="893.9999999999999" cy="48.6" r="3.2" fill="#3865a6"/><path d="M892.9 50.4 v-3.6 h1.5 q1.1 0 1.1 1 q0 1 -1.1 1 h-1.3 M894.4999999999999 48.8 l1.1 1.6" fill="none" stroke="#dfe8f5" stroke-width="0.7" opacity="0.85"/><path d="M944.0 48.3 l4.2 4.2 M948.1999999999999 48.3 l-4.2 4.2" stroke="#76838f" stroke-width="1.2"/><path d="M965.3 43.9 h6.2 l3 3 v7.6 h-9.2 Z" fill="#f4f5f6"/><path d="M971.5 43.9 v3 h3 Z" fill="#c9ced3"/><circle cx="967.0999999999999" cy="48.6" r="3.2" fill="#3865a6"/><path d="M966.0 50.4 v-3.6 h1.5 q1.1 0 1.1 1 q0 1 -1.1 1 h-1.3 M967.5999999999999 48.8 l1.1 1.6" fill="none" stroke="#dfe8f5" stroke-width="0.7" opacity="0.85"/><path d="M1004 47.8 l3.2 3.2 l-3.2 3.2 M1008.3 47.8 l3.2 3.2 l-3.2 3.2" fill="none" stroke="#d3d9df" stroke-width="1.1"/><rect x="1019.8" y="51.2" width="5" height="3.4" rx="0.6" fill="none" stroke="#aeb7bf" stroke-width="0.9"/><rect x="1019.6" y="192.2" width="5" height="3.4" rx="0.6" fill="none" stroke="#aeb7bf" stroke-width="0.9"/><path d="M13.4 67.7 l5 -4.4 v2.5 h5.3 v3.8 h-5.3 v2.5 Z" fill="#e1e5e8"/><path d="M36.3 67.7 l-5 -4.4 v2.5 h-5.2 v3.8 h5.2 v2.5 Z" fill="#75818b"/><rect x="41.5" y="61.2" width="1.3" height="11.0" fill="#232d36"/><rect x="42.800000000000004" y="61.2" width="0.8" height="11.0" fill="#5a6873"/><rect x="51.6" y="63.9" width="7.6" height="7" fill="#f2f3f4"/><rect x="51.6" y="63.9" width="7.6" height="1.6" fill="#a9c8e8"/><path d="M48.8 71.2 l3.4 -3.4 M49.9 67.6 h2.5 v2.5" fill="none" stroke="#f2f3f4" stroke-width="0.9"/><rect x="64.7" y="61.2" width="1.3" height="11.0" fill="#232d36"/><rect x="66.0" y="61.2" width="0.8" height="11.0" fill="#5a6873"/><rect x="72.5" y="63.4" width="8.6" height="8.8" rx="0.8" fill="#5796dc"/><rect x="73.7" y="63.4" width="6.199999999999999" height="3.5200000000000005" fill="#e9f1fb"/><rect x="73.7" y="64.80799999999999" width="6.199999999999999" height="0.9" fill="#9cc3ee"/><rect x="74.5" y="68.856" width="4.6" height="3.3440000000000003" fill="#e9f1fb"/><rect x="75.6" y="69.56" width="1.6" height="2.112" fill="#4d89cf"/><rect x="88.3" y="64.8" width="7.8" height="7.6" rx="1.4" fill="#c9ced2" stroke="#f4f5f6" stroke-width="1"/><rect x="159.3" y="61.2" width="1.3" height="11.0" fill="#232d36"/><rect x="160.6" y="61.2" width="0.8" height="11.0" fill="#5a6873"/><path d="M173.4 68.2 l3.9 3.7" stroke="#b88237" stroke-width="1.7" stroke-linecap="round"/><circle cx="171.1" cy="65.8" r="3.2" fill="#dbe6f2" stroke="#aab6c2" stroke-width="0.7"/><path d="M185.2 71.6 l7.6 -7.4" stroke="#23272b" stroke-width="1.3"/><path d="M185.1 71.7 l1 -1 M191.9 65.1 l1 -1" stroke="#9fd0f2" stroke-width="1.4"/><path d="M190.2 61.8 l0.8 1.4 M193.2 61.2 v1.5 M195.8 62.4 l-1 1 M196.4 65 h-1.5 M195.4 67.6 l-1 -1 M193.6 68.4 v-1.2" stroke="#e98a3c" stroke-width="0.9"/><path d="M201.7 67.1 h3.6 l-1.8 2.0 Z" fill="#d9dee2"/><rect x="207.70000000000002" y="61.2" width="1.3" height="11.0" fill="#232d36"/><rect x="209.0" y="61.2" width="0.8" height="11.0" fill="#5a6873"/><rect x="215.6" y="62.5" width="9.4" height="9.2" rx="0.6" fill="#eceeef"/><path d="M216.6 64.6 h7.6 M216.6 66.8 h7.6 M216.6 69 h7.6 M219 63 v8.4" stroke="#c3c8cc" stroke-width="0.6"/><rect x="873" y="62.8" width="7.6" height="8" fill="#f2f3f4"/><path d="M874 65.4 h4.2 M874 67.4 h3" stroke="#9aa9d8" stroke-width="0.8"/><path d="M879.4 65.6 h3.2 v-1.9 l3.6 3 l-3.6 3 v-1.9 h-3.2 Z" fill="#1f9e4d"/><rect x="908.8" y="61.2" width="1.3" height="11.0" fill="#232d36"/><rect x="910.1" y="61.2" width="0.8" height="11.0" fill="#5a6873"/><rect x="915.6" y="62.8" width="7.8" height="8" fill="#f2f3f4"/><path d="M917.3 68.2 q-0.4 -3.4 3 -3.2 M919.4 63.6 l1.6 1.4 l-1.6 1.4" fill="none" stroke="#3b6fc4" stroke-width="1"/><path d="M922.6 65.9 h3 v-1.9 l3.6 3 l-3.6 3 v-1.9 h-3 Z" fill="#1f9e4d"/><path d="M939.4 62.9 l4.4 4.6 h-2.7 v4.2 h-3.4 v-4.2 h-2.7 Z" fill="#f4f5f6"/><path d="M957.1 71.8 l4.4 -4.6 h-2.7 v-4.2 h-3.4 v4.2 h-2.7 Z" fill="#f4f5f6"/><rect x="966.3" y="61.2" width="1.3" height="11.0" fill="#232d36"/><rect x="967.6" y="61.2" width="0.8" height="11.0" fill="#5a6873"/><rect x="973.8" y="62.8" width="6.8" height="8" fill="#f2f3f4"/><path d="M979.6 65.7 h3.6 v-1.9 l3.6 3 l-3.6 3 v-1.9 h-3.6 Z" fill="#5c9bd8"/><path d="M1020.8 66.6 h3.8 l-1.9 2.1 Z" fill="#d9dee2"/><path d="M95 168.6 l1.7 -2 l1.7 2 Z M95 170.2 l1.7 2 l1.7 -2 Z" fill="#9aa5ae"/><path d="M90.4 188.4 l4.2 4.2 M94.60000000000001 188.4 l-4.2 4.2" stroke="#76838f" stroke-width="1.2"/><path d="M174.5 188.4 l4.2 4.2 M178.7 188.4 l-4.2 4.2" stroke="#76838f" stroke-width="1.2"/><ellipse cx="18.4" cy="205.8" rx="5.7" ry="3.5" fill="none" stroke="#dfe3e6" stroke-width="2.1"/><path d="M18.2 211.6 v-6.6 h3 q2.2 0 2.2 1.9 q0 1.8 -2.2 1.8 h-2.6 M21.6 208.8 l2.3 2.8" fill="none" stroke="#2b8df2" stroke-width="2"/><path d="M227.8 210.6 q0.2 -3.6 4 -3.8 v-2.2 l3.9 3.3 l-3.9 3.3 v-2.2 q-2.6 -0.2 -4 1.6 Z" fill="#d5dade"/></svg>
<!--DIALOG-->
<svg style="left:0;top:0" width="1024" height="565" viewBox="0 0 1024 565"><path d="M58.7 37.6 C59.8 36.8 62.3 34.0 65 32.5 C67.7 31.0 71.2 29.8 75 28.8 C78.8 27.8 82.5 26.9 87.5 26.3 C92.5 25.8 99.6 25.6 105 25.5 C110.4 25.4 115.0 25.7 120 26 C125.0 26.3 130.8 26.8 135 27.5 C139.2 28.2 140.8 29.2 145 30 C149.2 30.8 154.2 31.8 160 32.5 C165.8 33.2 173.3 34.0 180 34.5 C186.7 35.0 192.5 35.3 200 35.5 C207.5 35.7 215.7 35.6 225 35.6 C234.3 35.6 244.7 35.6 256 35.5 C267.3 35.4 280.5 35.3 293 35 C305.5 34.7 321.5 34.3 331 33.6 C340.5 32.9 343.5 31.7 350 31 C356.5 30.3 364.2 29.9 370 29.6 C375.8 29.4 380.0 29.6 385 29.5 C390.0 29.4 395.0 28.7 400 28.7 C405.0 28.7 409.8 28.9 415 29.3 C420.2 29.7 424.2 30.6 431 31.1 C437.8 31.6 447.7 31.9 456 32.5 C464.3 33.1 471.7 33.8 481 34.5 C490.3 35.2 502.7 36.3 512 37 C521.3 37.7 528.7 38.3 537 38.7 C545.3 39.1 553.7 39.4 562 39.5 C570.3 39.6 578.7 39.6 587 39.5 C595.3 39.4 604.5 39.1 612 38.7 C619.5 38.3 625.8 37.5 632 37 C638.2 36.5 643.2 35.8 649 35.5 C654.8 35.2 660.7 35.3 667 35.5 C673.3 35.7 679.5 36.2 687 36.5 C694.5 36.8 703.7 37.3 712 37.5 C720.3 37.7 727.7 37.7 737 37.5 C746.3 37.3 760.3 36.8 768 36.3 C775.7 35.8 778.0 34.9 783 34.5 C788.0 34.1 793.0 33.6 798 33.8 C803.0 34.0 807.7 35.0 813 35.5 C818.3 36.0 823.0 36.9 830 37 C837.0 37.1 847.8 36.2 855 36.3 C862.2 36.4 867.5 36.8 873 37.5 C878.5 38.2 883.0 39.5 888 40.5 C893.0 41.5 898.0 42.4 903 43.8 C908.0 45.2 913.8 47.1 918 48.8 C922.2 50.5 925.5 52.3 928 53.8 C930.5 55.3 934.7 57.3 933 58 C931.3 58.7 924.7 58.2 918 58 C911.3 57.8 901.3 57.2 893 57 C884.7 56.8 876.3 56.8 868 57 C859.7 57.2 851.3 57.5 843 58 C834.7 58.5 826.3 59.3 818 60 C809.7 60.7 801.3 61.4 793 62 C784.7 62.6 777.3 63.2 768 63.7 C758.7 64.2 746.3 64.6 737 65 C727.7 65.4 720.3 65.9 712 66.3 C703.7 66.7 695.3 67.2 687 67.5 C678.7 67.8 670.3 68.1 662 68 C653.7 67.9 645.3 67.5 637 67 C628.7 66.5 620.3 66.0 612 65 C603.7 64.0 595.3 62.6 587 61.3 C578.7 60.0 570.3 58.1 562 57 C553.7 55.9 545.3 55.5 537 54.5 C528.7 53.5 521.3 51.7 512 51.3 C502.7 50.9 490.3 51.9 481 52 C471.7 52.1 464.3 51.7 456 52 C447.7 52.3 439.3 53.0 431 53.8 C422.7 54.6 414.3 55.8 406 57 C397.7 58.2 389.3 60.0 381 61.3 C372.7 62.5 364.3 63.9 356 64.5 C347.7 65.1 339.3 65.0 331 65 C322.7 65.0 314.3 64.9 306 64.5 C297.7 64.1 289.3 63.2 281 62.5 C272.7 61.8 265.3 60.6 256 60 C246.7 59.4 234.3 59.1 225 58.8 C215.7 58.5 208.3 58.2 200 58 C191.7 57.8 183.3 57.5 175 57.5 C166.7 57.5 158.3 57.9 150 58 C141.7 58.1 133.3 58.2 125 58 C116.7 57.8 108.3 57.7 100 57 C91.7 56.3 83.3 54.5 75 53.8 C66.7 53.0 57.1 52.7 50 52.5 C42.9 52.3 36.5 52.7 32.5 52.5 C28.6 52.3 26.7 52.3 26.3 51.3 C25.9 50.3 28.1 48.0 30 46.3 C31.9 44.6 34.6 42.5 37.5 41.3 C40.4 40.0 44.0 39.4 47.5 38.8 C51.0 38.2 55.4 37.8 58.7 37.6 C62.0 37.4 66.0 37.5 67.5 37.5" fill="none" stroke="#f00d12" stroke-width="1.9" stroke-linecap="round" stroke-linejoin="round"/></svg>
</div></body></html>
